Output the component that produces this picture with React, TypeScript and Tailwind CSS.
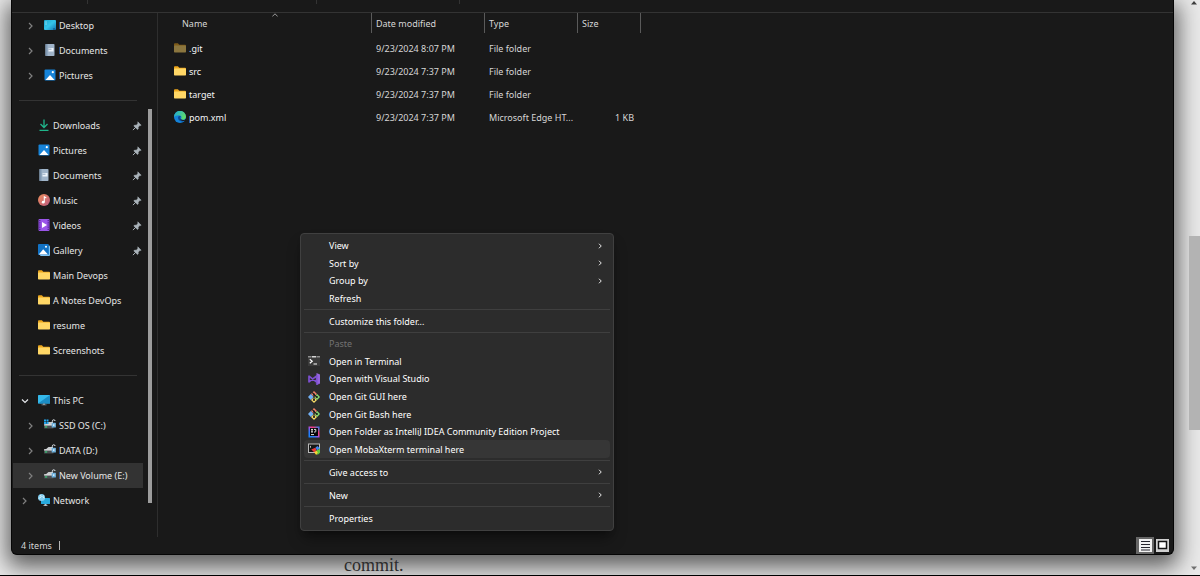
import type { ReactNode } from 'react'

type IconName =
  | 'desktop' | 'document' | 'picture' | 'download' | 'music' | 'video' | 'gallery' | 'folder'
  | 'hiddenFolder' | 'pc' | 'osDrive' | 'drive' | 'network' | 'edge'
  | 'terminal' | 'vs' | 'git' | 'idea' | 'moba'

const driveShape = (
  <>
    <path d="M4.500 3h4.200v3H1z" fill="#c9cdd0" />
    <rect x="0" y="5.500" width="9.500" height="4" rx=".6" fill="#4a4e52" />
    <rect x="0" y="5.300" width="9.500" height="1.100" rx=".4" fill="#eceeef" />
    <rect x="1" y="7.400" width="2.200" height="1.100" fill="#37d67a" />
    <path d="M8.300 4.200V2.400a1.400 1.400 0 0 1 2.800-.4" fill="none" stroke="#dfe5ea" strokeWidth="1" />
    <rect x="7.700" y="3.800" width="4.200" height="4.800" rx=".6" fill="#6fb1dc" />
    <rect x="9.300" y="5.200" width="1" height="1.800" fill="#fff" />
  </>
)

const icons: Record<IconName, ReactNode> = {
  desktop: (
    <>
      <defs>
        <linearGradient id="desk" x1="0" y1="0" x2="1" y2="1">
          <stop offset="0" stopColor="#1fa9cf" />
          <stop offset=".5" stopColor="#35c5ea" />
          <stop offset="1" stopColor="#1275b3" />
        </linearGradient>
      </defs>
      <rect x="0" y="1" width="12" height="10" rx="1" fill="url(#desk)" />
      <path d="M1.500 2.500h1v1h-1zM1.500 4.500h1v1h-1z" fill="#d5f6ff" />
      <rect x="9" y="9.500" width="2" height="1" fill="#0a4f80" />
    </>
  ),
  document: (
    <>
      <rect x="1.500" y="0" width="9" height="12" rx=".8" fill="#a0b4c9" />
      <rect x="1.500" y="0" width="2" height="12" fill="#7f97b1" />
      <rect x="4.500" y="4" width="5" height="3.500" fill="#edf4fb" />
      <path d="M4.500 5.200h3" stroke="#6d87a5" strokeWidth=".7" />
    </>
  ),
  picture: (
    <>
      <rect x=".5" y=".5" width="11" height="11" rx="1" fill="#1683d8" />
      <path d="M1.500 11 6 6l4.500 5z" fill="#fff" />
      <circle cx="8.800" cy="3.200" r="1.100" fill="#fff" />
    </>
  ),
  download: (
    <path d="M6 .5v7.700M2.500 5 6 8.500 9.500 5M1.500 11.300h9" fill="none" stroke="#1fb58a" strokeWidth="1.300" />
  ),
  music: (
    <>
      <defs>
        <linearGradient id="mus" x1="0" y1="0" x2="1" y2="1">
          <stop offset="0" stopColor="#f0905c" />
          <stop offset="1" stopColor="#b8577f" />
        </linearGradient>
      </defs>
      <circle cx="6" cy="6" r="6" fill="url(#mus)" />
      <path d="M6.300 8.200V2.800l2 1.200" fill="none" stroke="#fff" strokeWidth="1.100" />
      <circle cx="5.200" cy="8.200" r="1.400" fill="#fff" />
    </>
  ),
  video: (
    <>
      <rect x=".5" y="0" width="11" height="12" rx="1" fill="#9a55e8" />
      <path d="M1.800 1v10M10.200 1v10" stroke="#4b1c93" strokeWidth="1.200" strokeDasharray="1.200 1" />
      <path d="M4 3v6l5-3z" fill="#fff" />
    </>
  ),
  gallery: (
    <>
      <rect x="2" y="1.500" width="10" height="10.500" rx="1" fill="#7cc4f5" />
      <rect x="0" y="0" width="10.800" height="11" rx="1" fill="#1272c4" />
      <path d="M.8 10.500 5.200 5.300l4.800 5.200z" fill="#fff" />
      <circle cx="8" cy="2.800" r="1" fill="#fff" />
    </>
  ),
  folder: (
    <>
      <path d="M0 2.200c0-.6.300-.9.900-.9h3l1.400 1.400h5.800c.5 0 .9.300.9.800V9H0z" fill="#eda61c" />
      <rect x="0" y="3.500" width="12" height="7" rx=".7" fill="#ffd766" />
    </>
  ),
  hiddenFolder: (
    <>
      <path d="M0 2.200c0-.6.300-.9.900-.9h3l1.400 1.400h5.800c.5 0 .9.300.9.800V9H0z" fill="#7d5a18" />
      <rect x="0" y="3.500" width="12" height="7" rx=".7" fill="#8b763f" />
    </>
  ),
  pc: (
    <>
      <rect x="0" y="1" width="12" height="8.500" rx=".6" fill="#35b9ea" />
      <path d="M0 9.500 12 1v8.500z" fill="#1b8cc4" />
      <path d="M5 9.500h2v1h1.500v.8h-5v-.8H5z" fill="#8b969d" />
    </>
  ),
  osDrive: (
    <>
      {driveShape}
      <path d="M0 .5h2v2H0zM2.500.5h2v2h-2zM0 3h2v2H0zM2.500 3h2v2h-2z" fill="#22a7f0" />
    </>
  ),
  drive: driveShape,
  network: (
    <>
      <rect x="3" y="4" width="9" height="6" rx=".5" fill="#27a9dd" />
      <path d="M6.500 10h2v1.200h1v.8h-4v-.8h1z" fill="#b8c0c6" />
      <circle cx="3.500" cy="3.500" r="3.500" fill="#82cdf0" />
      <path d="M2 1.200c1 .2 1.500 1 1 1.800S1 3.800.8 4.600M5.500 1.500c-.8.800-.6 2 .8 2.600" fill="none" stroke="#e7f8ff" strokeWidth="1" />
    </>
  ),
  edge: (
    <>
      <defs>
        <linearGradient id="edgeTop" x1="0" y1="0" x2="1" y2=".4">
          <stop offset="0" stopColor="#1aa5dc" />
          <stop offset="1" stopColor="#5fdc6a" />
        </linearGradient>
      </defs>
      <circle cx="6" cy="6" r="6" fill="#1482d8" />
      <path d="M0 6a6 6 0 0 1 12-.3c0 2-1.500 3-3.200 3-1.400 0-2-.6-1.500-1.400C8 5.500 6.800 4.200 5 4.200 2.500 4.200.6 5.200 0 6z" fill="url(#edgeTop)" />
      <path d="M4.200 5.800c-.7 2.600 1.300 5 4.600 4.600 1-.1 1.700-.5 2.200-1C9 9.800 6.300 9 6.200 6.800c0-.8.500-1 .6-1.500-1-.6-2.100-.5-2.600.5z" fill="#0d4a94" />
      <path d="M6.400 6.300c-.4 1.500.6 2.700 2.800 2.700 1.300 0 2.300-.5 2.800-1.500v1.300l-1.300.9c-2.600.8-4.900-.6-4.300-3.400z" fill="#191919" />
    </>
  ),
  terminal: (
    <>
      <rect x="0" y="1" width="12" height="10" fill="#3b3b3b" />
      <path d="M0 1h3.500v1.500H0z" fill="#8f8f8f" />
      <path d="M4 1h4v1.500H4z" fill="#d8d8d8" />
      <path d="M8.500 1H12v1.500H8.500z" fill="#8f8f8f" />
      <path d="m1.800 4.300 2.400 2-2.400 2M5.500 9h3.500" fill="none" stroke="#fff" strokeWidth="1.200" />
    </>
  ),
  vs: (
    <>
      <path d="M8.500 0 12 1.500v9L8.500 12z" fill="#9463dd" />
      <path d="M1 3.200v5.600L8.700 2.800v6.400z" fill="none" stroke="#7d4fd0" strokeWidth="1.700" strokeLinejoin="round" />
      <path d="M7.500 10.600 12 10.300 8.800 12z" fill="#7d4fd0" />
    </>
  ),
  git: (
    <>
      <path d="M6 0 9 3 6 6 3 3z" fill="#f58268" />
      <path d="M9.200 3 12 6 9.200 9 6.400 6z" fill="#86dd70" />
      <path d="M2.800 3l2.800 3-2.800 3L0 6z" fill="#72b0f5" />
      <path d="M6 6l3 3-3 3-3-3z" fill="#f8dd68" />
      <path d="M4.200 1.500 6 3.300V9M6 3.500 8.800 6" fill="none" stroke="#202020" strokeWidth="1.100" />
      <circle cx="6" cy="3.500" r="1.100" fill="#202020" />
      <circle cx="6" cy="9" r="1.100" fill="#202020" />
      <circle cx="8.900" cy="6" r="1.100" fill="#202020" />
    </>
  ),
  idea: (
    <>
      <defs>
        <linearGradient id="idea" x1="0" y1="1" x2="1" y2="0">
          <stop offset="0" stopColor="#1784ff" />
          <stop offset=".3" stopColor="#2a7bff" />
          <stop offset=".5" stopColor="#b04bd8" />
          <stop offset=".65" stopColor="#fe3a70" />
          <stop offset="1" stopColor="#1784ff" />
        </linearGradient>
      </defs>
      <rect x=".5" y=".5" width="11" height="11" fill="url(#idea)" />
      <rect x="2" y="2" width="8" height="8" fill="#060608" />
      <path d="M3 3.400h2M4 3.400v2.600M3 6h2M6 3.400h1.800v2c0 .5-.4.700-1.800.6M3 8.600h3" fill="none" stroke="#fff" strokeWidth=".9" />
    </>
  ),
  moba: (
    <>
      <rect x=".5" y="1" width="11" height="8.500" fill="#161616" stroke="#b9b9b9" strokeWidth="1" />
      <path d="m2 3 1 .8-1 .8" fill="none" stroke="#fff" strokeWidth=".7" />
      <path d="M3.200 6.500 7.500 4.800l.8 2L6.500 9.500z" fill="#ef3b3b" />
      <path d="M7.500 4.500 9.500 3 12 5.500 9 7.500z" fill="#3f86ee" />
      <path d="M8.500 7.500 12 5.800v4L9.500 12z" fill="#62c93f" />
      <path d="M6.300 9.500 8.300 7.300l1.500 2.500L8.200 12z" fill="#f7d534" />
    </>
  ),
}

function Icon({ name }: { name: IconName }) {
  return (
    <svg viewBox="0 0 12 12" className="size-3 shrink-0" aria-hidden="true">
      {icons[name]}
    </svg>
  )
}

function Chevron({ open = false, className }: { open?: boolean; className: string }) {
  return (
    <svg viewBox="0 0 6 8" className={`shrink-0 overflow-visible ${className}`} aria-hidden="true">
      <path
        d={open ? 'M0 2.500 3 5.500l3-3' : 'M1 1l3 3-3 3'}
        fill="none"
        stroke="currentColor"
        strokeWidth="1.200"
      />
    </svg>
  )
}

function Pin() {
  return (
    <svg viewBox="0 0 10 10" className="mr-px size-[10px] shrink-0" aria-hidden="true">
      <path d="M5.800.8 9.200 4.200l-.8.400-.6-.1-1.600 1.700.1 1.600-.8.800L1.800 4.900l.8-.8 1.600.1 1.700-1.700-.1-.9z" fill="#a9b2b9" stroke="#a9b2b9" strokeWidth=".5" />
      <path d="M3.800 6.200.9 9.100" stroke="#a9b2b9" strokeWidth="1" />
    </svg>
  )
}

interface NavItem {
  label: string
  icon: IconName
  nested?: boolean
  arrow?: 'open' | 'closed'
  pinned?: boolean
  active?: boolean
}

const navGroups: NavItem[][] = [
  [
    { label: 'Desktop', icon: 'desktop', nested: true, arrow: 'closed' },
    { label: 'Documents', icon: 'document', nested: true, arrow: 'closed' },
    { label: 'Pictures', icon: 'picture', nested: true, arrow: 'closed' },
  ],
  [
    { label: 'Downloads', icon: 'download', pinned: true },
    { label: 'Pictures', icon: 'picture', pinned: true },
    { label: 'Documents', icon: 'document', pinned: true },
    { label: 'Music', icon: 'music', pinned: true },
    { label: 'Videos', icon: 'video', pinned: true },
    { label: 'Gallery', icon: 'gallery', pinned: true },
    { label: 'Main Devops', icon: 'folder' },
    { label: 'A Notes DevOps', icon: 'folder' },
    { label: 'resume', icon: 'folder' },
    { label: 'Screenshots', icon: 'folder' },
  ],
  [
    { label: 'This PC', icon: 'pc', arrow: 'open' },
    { label: 'SSD OS (C:)', icon: 'osDrive', nested: true, arrow: 'closed' },
    { label: 'DATA (D:)', icon: 'drive', nested: true, arrow: 'closed' },
    { label: 'New Volume (E:)', icon: 'drive', nested: true, arrow: 'closed', active: true },
    { label: 'Network', icon: 'network', arrow: 'closed' },
  ],
]

function NavRow({ item }: { item: NavItem }) {
  return (
    <button
      className={`flex h-[25px] w-full items-center whitespace-nowrap text-left ${
        item.nested ? 'pl-[15px]' : 'pl-[9px]'
      } ${item.active ? 'bg-[#333333]' : ''}`}
    >
      <span className="flex w-4 shrink-0">
        {item.arrow && (
          <Chevron
            open={item.arrow === 'open'}
            className={item.arrow === 'open' ? 'h-2 w-[6px] text-gray-200' : 'h-2 w-[6px] text-[#808080]'}
          />
        )}
      </span>
      <span className="shrink-0 pb-px">
        <Icon name={item.icon} />
      </span>
      <span className="ml-[3px] flex-1">{item.label}</span>
      {item.pinned && <Pin />}
    </button>
  )
}

function Sidebar() {
  return (
    <aside className="flex w-[146px] shrink-0 border-r border-[#2e2e2e]">
      <nav className="ml-px w-[130px]">
        {navGroups.map((group, i) => (
          <div key={i}>
            {i > 0 && (
              <div className="flex h-[25px] items-center px-[6px]">
                <hr className="w-full border-[#333333]" />
              </div>
            )}
            {group.map((item) => (
              <NavRow key={item.label} item={item} />
            ))}
          </div>
        ))}
      </nav>
      <div className="mt-24 ml-[5px] h-[394px] w-1 bg-[#9d9d9d]" />
    </aside>
  )
}

const files: { name: string; icon: IconName; date: string; type: string; size: string }[] = [
  { name: '.git', icon: 'hiddenFolder', date: '9/23/2024 8:07 PM', type: 'File folder', size: '' },
  { name: 'src', icon: 'folder', date: '9/23/2024 7:37 PM', type: 'File folder', size: '' },
  { name: 'target', icon: 'folder', date: '9/23/2024 7:37 PM', type: 'File folder', size: '' },
  { name: 'pom.xml', icon: 'edge', date: '9/23/2024 7:37 PM', type: 'Microsoft Edge HT...', size: '1 KB' },
]

function FileTable() {
  return (
    <table className="w-[483px] table-fixed border-collapse whitespace-nowrap text-[#d6d6d6]">
      <colgroup>
        <col className="w-[214px]" />
        <col className="w-[113px]" />
        <col className="w-[93px]" />
        <col className="w-[63px]" />
      </colgroup>
      <thead>
        <tr className="h-6 text-left align-top">
          <th className="p-0 font-normal">
            <div className="relative flex h-5 items-center border-r border-[#5a5a5a] pt-[2px] pl-6">
              Name
              <svg viewBox="0 0 6 4" className="absolute top-0 left-[114px] h-1 w-[6px]" aria-hidden="true">
                <path d="M.3 3.500 3 .8l2.700 2.700" fill="none" stroke="#9a9a9a" />
              </svg>
            </div>
          </th>
          <th className="p-0 font-normal">
            <div className="flex h-5 items-center border-r border-[#5a5a5a] pt-[2px] pl-1">Date modified</div>
          </th>
          <th className="p-0 font-normal">
            <div className="flex h-5 items-center border-r border-[#5a5a5a] pt-[2px] pl-1">Type</div>
          </th>
          <th className="p-0 font-normal">
            <div className="flex h-5 items-center border-r border-[#5a5a5a] pt-[2px] pl-1">Size</div>
          </th>
        </tr>
      </thead>
      <tbody>
        {files.map((file) => (
          <tr key={file.name} className="h-[23px]">
            <td className="p-0">
              <div className="flex items-center gap-[3px] pl-4 text-gray-100">
                <span className="pb-[2px]">
                  <Icon name={file.icon} />
                </span>
                {file.name}
              </div>
            </td>
            <td className="p-0 pl-1">{file.date}</td>
            <td className="p-0 pl-1">{file.type}</td>
            <td className="p-0 pr-[7px] text-right">{file.size}</td>
          </tr>
        ))}
      </tbody>
    </table>
  )
}

interface MenuEntry {
  label: string
  icon?: IconName
  submenu?: boolean
  disabled?: boolean
  active?: boolean
}

const menuGroups: { height: string; items: MenuEntry[] }[] = [
  {
    height: 'h-[70px]',
    items: [
      { label: 'View', submenu: true },
      { label: 'Sort by', submenu: true },
      { label: 'Group by', submenu: true },
      { label: 'Refresh' },
    ],
  },
  { height: 'h-[18px]', items: [{ label: 'Customize this folder...' }] },
  {
    height: 'h-[123px]',
    items: [
      { label: 'Paste', disabled: true },
      { label: 'Open in Terminal', icon: 'terminal' },
      { label: 'Open with Visual Studio', icon: 'vs' },
      { label: 'Open Git GUI here', icon: 'git' },
      { label: 'Open Git Bash here', icon: 'git' },
      { label: 'Open Folder as IntelliJ IDEA Community Edition Project', icon: 'idea' },
      { label: 'Open MobaXterm terminal here', icon: 'moba', active: true },
    ],
  },
  { height: 'h-[18px]', items: [{ label: 'Give access to', submenu: true }] },
  { height: 'h-[18px]', items: [{ label: 'New', submenu: true }] },
  { height: 'h-[18px]', items: [{ label: 'Properties' }] },
]

function ContextMenu() {
  return (
    <div
      role="menu"
      className="absolute top-[220px] left-[142px] w-[314px] rounded border border-[#404040] bg-[#2c2c2c] p-[3px] text-white shadow-lg shadow-black/40"
    >
      {menuGroups.map((group, i) => (
        <div key={i}>
          {i > 0 && <hr className="my-[2px] border-[#3f3f3f]" />}
          <div className={`flex flex-col ${group.height}`}>
            {group.items.map((item) => (
              <button
                key={item.label}
                role="menuitem"
                disabled={item.disabled}
                className={`flex flex-1 items-center rounded-sm pr-[7px] pl-1 text-left whitespace-nowrap disabled:text-[#727272] ${
                  item.active ? 'bg-[#363636]' : ''
                }`}
              >
                <span className="flex w-[21px] shrink-0">{item.icon && <Icon name={item.icon} />}</span>
                <span className="flex-1 pt-px">{item.label}</span>
                {item.submenu && <Chevron className="h-[6px] w-[5px] text-white" />}
              </button>
            ))}
          </div>
        </div>
      ))}
    </div>
  )
}

function StatusBar() {
  return (
    <footer className="flex h-[17px] items-center pl-[9px] text-[#d6d6d6]">
      <span>4 items</span>
      <span className="ml-[7px] h-[9px] w-px bg-[#b5b5b5]" />
      <div className="mr-1 ml-auto flex h-full items-center gap-px">
        <button aria-label="Details view" className="flex h-full w-[18px] items-center justify-center bg-[#666666]">
          <svg viewBox="0 0 13 13" className="size-[13px]" aria-hidden="true">
            <path d="M0 0h13v13H0z" fill="#f2f2f2" />
            <path d="M2 2.500h9M2 5.500h9M2 8.500h9M2 11h9" stroke="#26262e" />
          </svg>
        </button>
        <button aria-label="Large icons view" className="flex h-full w-[14px] items-center justify-center">
          <svg viewBox="0 0 13 13" className="size-[13px]" aria-hidden="true">
            <path d="M0 0h13v13H0z" fill="#d0d0d0" />
            <path d="M2.500 2.500h8v7h-8z" fill="#fff" stroke="#141414" strokeWidth="1.500" />
          </svg>
        </button>
      </div>
    </footer>
  )
}

function ExplorerWindow() {
  return (
    <section className="relative flex flex-1 flex-col rounded-b-md border border-t-0 border-[#050505] bg-[#191919] font-['Noto_Sans','Open_Sans',sans-serif] text-[9px] leading-3 text-[#e6e6e6] shadow-[0_8px_22px_4px_rgba(0,0,0,0.6)]">
      <div className="flex h-[13px] items-start border-b border-[#333333]">
        <span className="ml-[75px] h-1 w-px bg-[#333333]" />
        <span className="ml-[228px] h-1 w-px bg-[#333333]" />
        <span className="ml-[142px] h-1 w-px bg-[#333333]" />
      </div>
      <div className="flex flex-1">
        <Sidebar />
        <main className="relative flex-1">
          <FileTable />
          <ContextMenu />
        </main>
      </div>
      <StatusBar />
    </section>
  )
}

function PageScrollbar() {
  return (
    <div className="relative flex w-3 shrink-0 flex-col items-center">
      <svg viewBox="0 0 6 4" className="mt-px h-1 w-[6px]" aria-hidden="true">
        <path d="M3 0l3 3.500H0z" fill="#3d3d3d" />
      </svg>
      <div className="mt-[231px] h-[194px] w-[11px] bg-[#b3b3b3]" />
      <svg viewBox="0 0 6 4" className="mt-auto mb-[5px] h-1 w-[6px]" aria-hidden="true">
        <path d="M3 4 0 .5h6z" fill="#707070" />
      </svg>
    </div>
  )
}

export default function App() {
  return (
    <div className="flex min-h-screen flex-col bg-[#e9e9e9]">
      <div className="flex flex-1">
        <div className="flex flex-1 flex-col pr-[14px] pl-[11px]">
          <ExplorerWindow />
          <p className="relative h-5 pl-[333px] font-['Liberation_Serif',serif] text-lg leading-[21px] text-[#2c2c2c]">
            commit.
          </p>
        </div>
        <PageScrollbar />
      </div>
      <div className="relative h-px bg-black" />
    </div>
  )
}
